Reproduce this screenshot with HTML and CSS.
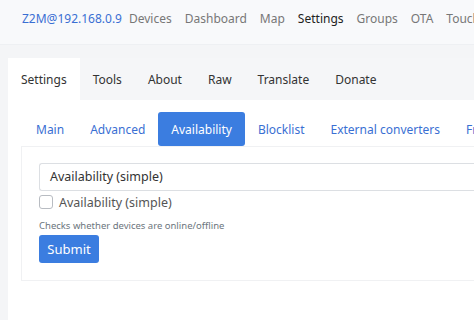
FILE: index.html
```html
<!DOCTYPE html>
<html>
    <head>
        <meta name="viewport" content="width=device-width">
        <title>Z2M</title>
        <link rel="stylesheet" href="styles.css">
    </head>
    <body>
        <div class="nav">
            <a class="brand">Z2M@192.168.0.9</a>
            <a class="nav-link">Devices</a>
            <a class="nav-link">Dashboard</a>
            <a class="nav-link">Map</a>
            <a class="nav-link active">Settings</a>
            <a class="nav-link">Groups</a>
            <a class="nav-link">OTA</a>
            <a class="nav-link">Touchlink</a>
        </div>
        <div class="page">
            <div class="card">
                <div class="tabs">
                    <div class="tab active">Settings</div>
                    <div class="tab">Tools</div>
                    <div class="tab">About</div>
                    <div class="tab">Raw</div>
                    <div class="tab">Translate</div>
                    <div class="tab">Donate</div>
                </div>
                <div class="card-body">
                    <div class="pills">
                        <div class="pill">Main</div>
                        <div class="pill">Advanced</div>
                        <div class="pill active">Availability</div>
                        <div class="pill">Blocklist</div>
                        <div class="pill">External converters</div>
                        <div class="pill">Frontend</div>
                    </div>
                    <div class="inner">
                        <div class="field">Availability (simple)</div>
                        <label class="check"><span class="box"></span>Availability (simple)</label>
                        <div class="help">Checks whether devices are online/offline</div>
                        <button class="btn">Submit</button>
                    </div>
                </div>
            </div>
        </div>
    </body>
</html>
```
FILE: styles.css
```css
html, body{
    margin:0;
    overflow:hidden;
    height:320px;
}
body{
    background:#f4f5f7;
    font-family:"Noto Sans", "Open Sans", sans-serif;
    font-size:12px;
    color:#333;
}
.nav{
    display:flex;
    align-items:center;
    height:45px;
    padding-left:22px;
    padding-bottom:8px;
    background:#f8f9fb;
    white-space:nowrap;
    box-sizing:border-box;
    border-bottom:1px solid #eef0f3;
}
.brand{color:#3a6fd3}
.nav-link{color:#777;margin-left:13px}
.brand + .nav-link{margin-left:7px}
.nav-link.active{color:#222}

.page{padding:13px 0 0 8px}
.card{width:620px;background:#fff;height:300px}
.tabs{display:flex;background:#f5f6f8;height:42px}
.tab{
    display:flex;
    align-items:center;
    padding:0 13px;
    color:#333;
}
.tab.active{background:#fff}

.card-body{padding:12px 0 0 14px}
.pills{display:flex;height:34px}
.pill{
    display:flex;
    align-items:center;
    padding:0 13px;
    color:#3a6fd3;
    border-radius:3px;
    white-space:nowrap;
}
.pill:first-child{padding-left:14px}
.pill.active{background:#3b7de0;color:#fff}

.inner{
    margin-left:-1px;
    border:1px solid #f0f1f3;
    border-right:none;
    padding:16px 0 16px 17px;
    height:101px;
}
.field{
    height:26px;
    line-height:26px;
    border:1px solid #dcdfe3;
    border-right:none;
    border-radius:3px 0 0 3px;
    padding-left:10px;
    font-size:12.5px;
    color:#333;
}
.check{display:flex;align-items:center;margin-top:3px;color:#555;height:16px;font-size:12.5px}
.box{
    width:12px;height:12px;
    border:1px solid #b8bcc2;
    border-radius:3px;
    margin-right:6px;
    background:#fff;
}
.help{font-size:9.5px;color:#6c757d;margin-top:9px;line-height:13px}
.btn{
    margin-top:3px;
    background:#3b7de0;
    color:#fff;
    border:none;
    border-radius:3px;
    height:28px;
    width:60px;
    font-family:inherit;
    font-size:13px;
    padding:0;
}
```
